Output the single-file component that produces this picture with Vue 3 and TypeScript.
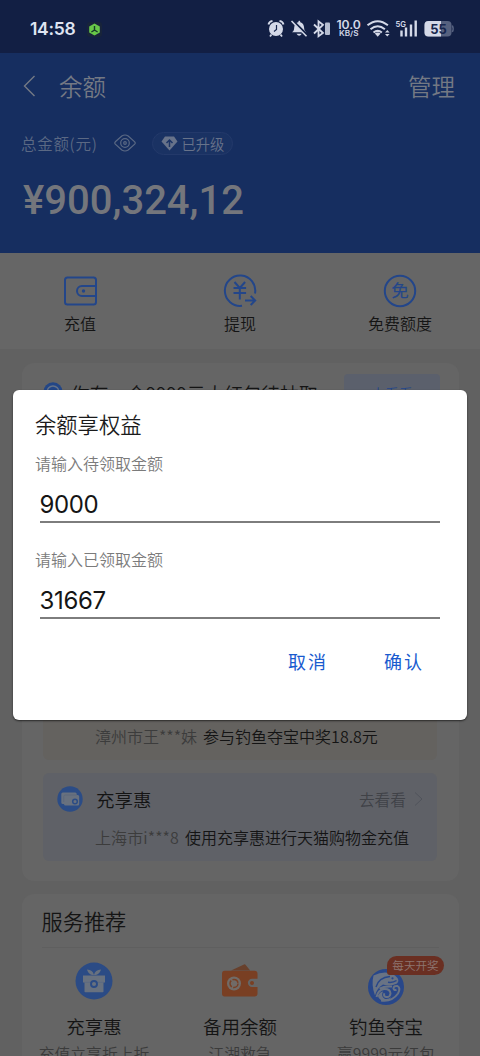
<script setup lang="ts">
import { ref } from 'vue'

interface Field {
  id: string
  label: string
  value: string
}

const fields = ref<Field[]>([
  { id: 'pending', label: '请输入待领取金额', value: '9000' },
  { id: 'claimed', label: '请输入已领取金额', value: '31667' },
])
</script>

<template>
  <div class="screen">
    <header class="status">
      <span class="clock">14:58</span>
      <svg class="cube" width="15" height="15" viewBox="0 0 15 15">
        <rect width="15" height="15" rx="3" fill="#18243a" />
        <path d="M7.5 1.5 12.8 4.5V10.5L7.5 13.5 2.2 10.5V4.5Z" fill="#68c849" />
        <path d="M7.5 4V8L4.4 10M7.5 8l3.1 2" stroke="#173c28" stroke-width="1.4" fill="none" />
      </svg>
      <svg class="status-icons" width="188" height="24" viewBox="267 17 188 24" fill="none" stroke="#d4d9e8">
        <circle cx="276" cy="29" r="7" fill="#d4d9e8" stroke="none" />
        <path d="M268.5 24.5Q269 21.5 272.5 20.8M279.5 20.8Q283 21.5 283.5 24.5M271.5 34.5l-1.5 2M280.5 34.5l1.5 2" stroke-width="1.8" />
        <path d="M276.5 25v4.5l-2.5 2" stroke="#17264e" stroke-width="1.2" />
        <path d="M292 32.300c2.200-1.200 2-3 2.200-4.700.2-3 1.700-5 4.100-5.400.2-1.800 1.800-1.800 2 0 2.600.6 3.700 3 3.800 5.500.1 2.400.6 3.400 2.400 4.600zM296.500 33.800h5.300q-2.600 4-5.300 0z" fill="#d4d9e8" stroke="none" />
        <path d="M291.800 19.800 307 35" stroke="#122044" stroke-width="2.500" />
        <path d="M291.500 21 306.500 36.200" stroke-width="1.6" />
        <path d="M314 24.5 323 33 318.5 36.3V21.3L323 24.8 314 33.5" stroke-width="1.8" />
        <rect x="325" y="22.5" width="5" height="12.5" rx="1" fill="#b5bdd0" stroke="none" />
        <g fill="#d4d9e8" stroke="none" font-family="Inter, sans-serif" font-weight="600">
          <text x="336.4" y="29" font-size="11.2" textLength="24.5" lengthAdjust="spacingAndGlyphs">10.0</text>
          <text x="339" y="36.300" font-size="7.3" textLength="19.5" lengthAdjust="spacingAndGlyphs">KB/S</text>
          <text x="395.5" y="26.7" font-size="8" textLength="10.5" lengthAdjust="spacingAndGlyphs">5G</text>
        </g>
        <path d="M367.5 25.3q10.200-8.200 20.400 0M370.500 29.200q7.200-5.800 14.400 0M373.500 32.500q4.200-3.200 8.400 0" stroke-width="2" />
        <path d="M374.800 33.500q2.900-2 5.800 0l-2.900 3.200zM385 32.600l2.300-2.600 2.300 2.600zM385 34l2.300 2.600 2.300-2.600z" fill="#d4d9e8" stroke="none" />
        <path d="M401.500 36.500v-6M406 36.500v-9M411 36.500v-12M415.700 36.500v-16" stroke-width="2.400" />
        <rect x="424.500" y="21" width="27" height="15.500" rx="4" fill="#56617f" stroke="none" />
        <path d="M428.500 21h12.500v15.500h-12.500q-4 0-4-4v-7.500q0-4 4-4z" fill="#d4d9e8" stroke="none" />
        <path d="M452.300 25.500q1.700 3.200 0 6.500" stroke="#56617f" stroke-width="1.500" />
        <text x="430.300" y="33.500" font-family="Inter, sans-serif" font-size="13" font-weight="700" fill="#17264e" stroke="none" textLength="16.500" lengthAdjust="spacingAndGlyphs">55</text>
      </svg>
    </header>

    <section class="balance">
      <nav class="nav">
        <svg width="14" height="22" viewBox="0 0 14 22" fill="none" stroke="#747984" stroke-width="1.400"><path d="M11.500 1 1.500 11 11.500 21" /></svg>
        <span class="nav-title">余额</span>
        <span class="manage">管理</span>
      </nav>
      <div class="summary">
        <span class="total">总金额(元)</span>
        <svg class="eye" width="22" height="18" viewBox="0 0 22 18" fill="none" stroke="#5b6984" stroke-width="1.200">
          <path d="M1.300 7.800 7.800 2q3.200-2 6.400 0l6.500 5.800q1 1.200 0 2.400L14.200 16q-3.200 2-6.400 0L1.300 10.200q-1-1.200 0-2.400z" />
          <circle cx="11" cy="9" r="4.300" /><circle cx="11" cy="9" r="1.300" />
        </svg>
        <span class="badge">
          <svg width="17" height="15" viewBox="0 0 17 15"><path d="M4 0.500h9l3.500 5L8.500 14.500 0.500 5.500z" fill="#68738a" /><path d="M8.500 11V4.500M5.500 7l3-3 3 3" stroke="#1d3566" stroke-width="1.500" fill="none" /></svg>
          已升级
        </span>
      </div>
      <div class="amount">¥900,324,12</div>
    </section>

    <section class="actions">
      <div class="action">
        <svg width="34" height="34" viewBox="0 0 34 34" fill="none" stroke="#23468a" stroke-width="2">
          <rect x="2" y="3.500" width="31" height="27" rx="2.500" />
          <path d="M32.500 12H19a5 5 0 0 0 0 10H32.500" /><circle cx="20.500" cy="17" r="1.700" fill="#23468a" stroke="none" />
        </svg>
        <span>充值</span>
      </div>
      <div class="action">
        <svg width="34" height="34" viewBox="0 0 34 34" fill="none" stroke="#23468a" stroke-width="2">
          <path d="M19 31.800A15.200 15.200 0 1 1 32 19.500" />
          <path d="M11.500 8l5.300 6 5.300-6M10.500 14h12.600M10.500 19h12.600M16.800 13.500v12M22 26.500h10M27.700 22l4.500 4.500-4.500 4.500" />
        </svg>
        <span>提现</span>
      </div>
      <div class="action">
        <svg width="34" height="34" viewBox="0 0 34 34" fill="none">
          <circle cx="17" cy="17" r="15.200" stroke="#23468a" stroke-width="2" />
          <text x="17" y="23.200" text-anchor="middle" font-size="17.500" fill="#23468a" stroke="#23468a" stroke-width=".250">免</text>
        </svg>
        <span>免费额度</span>
      </div>
    </section>

    <main class="content">
      <section class="card offers">
        <div class="promo">
          <svg width="20" height="20" viewBox="0 0 20 20"><circle cx="10" cy="10" r="9.700" fill="#234686" /><path d="M4 10a6 6 0 0 1 12 0" fill="none" stroke="#657287" stroke-width="1.500" /></svg>
          <span class="promo-text">你有一个9999元大红包待抽取</span>
          <span class="promo-button">去看看</span>
        </div>
        <article class="offer warm">
          <div class="offer-head"><span class="offer-icon"></span><h3>钓鱼夺宝</h3></div>
          <p><span class="user">漳州市王***妹</span><span>参与钓鱼夺宝中奖18.8元</span></p>
        </article>
        <article class="offer cool">
          <div class="offer-head">
            <svg class="offer-icon" width="26" height="26" viewBox="0 0 26 26">
              <circle cx="13" cy="13" r="12.700" fill="#2b4c86" />
              <path d="M4.300 8q0-1.500 1.500-1.500h12.400q1.500 0 1.500 1.500v1h1q1.500 0 1.500 1.500v7.500q0 1.500-1.500 1.500H8.500q-1.500 0-1.500-1.500H5.800q-1.500 0-1.500-1.500z" fill="#68717f" />
              <path d="M6.700 16V10.500Q6.700 9 8.200 9H19.700" fill="none" stroke="#59657c" stroke-width=".700" />
              <circle cx="18" cy="15.500" r="2.300" fill="#68717f" stroke="#2b4c86" stroke-width="1.500" />
            </svg>
            <h3>充享惠</h3>
            <span class="visit">去看看</span>
            <svg width="9" height="16" viewBox="0 0 9 16" fill="none" stroke="#50535b"><path d="M1 1.500 8 8 1 14.500" /></svg>
          </div>
          <p><span class="user">上海市i***8</span><span>使用充享惠进行天猫购物金充值</span></p>
        </article>
      </section>

      <section class="card services">
        <h2>服务推荐</h2>
        <div class="service-grid">
          <div class="service">
            <svg width="38" height="38" viewBox="0 0 38 38">
              <circle cx="19" cy="19" r="18.500" fill="#2b4b85" />
              <path d="M8 13.500h22v7h-1.500v9q0 .800-.800.800H10.300q-.800 0-.800-.800v-9H8zM19 13c-1-4-3-5-7-5.500 1 3.500 3 5.500 7 5.500 4 0 6-2 7-5.500-4 .500-6 1.500-7 5.500z" fill="#68717f" />
              <path d="M9.500 20.300h19" stroke="#566584" stroke-width=".600" /><circle cx="19" cy="22" r="3" fill="#68717f" stroke="#2b4b85" stroke-width="1.900" />
            </svg>
            <h3>充享惠</h3><p>充值立享折上折</p>
          </div>
          <div class="service">
            <svg width="38" height="38" viewBox="0 0 38 38">
              <path d="M10 8.500 23 2.500q1-.500 1.700.500l4.500 5.500z" fill="#68402c" />
              <path d="M3.500 8.700h30q3 0 3 3v5H31a4 4 0 0 0 0 8.300h5.500v6.500q0 3-3 3h-30q-2.500 0-2.500-3V11.700q0-3 2.500-3z" fill="#793f23" />
              <circle cx="13" cy="21.500" r="7" fill="#716b67" /><circle cx="13" cy="21.500" r="4" fill="none" stroke="#793f23" stroke-width="1.500" stroke-dasharray="7 1.400" /><circle cx="31" cy="21" r="2" fill="#793f23" />
            </svg>
            <h3>备用余额</h3><p>江湖救急</p>
          </div>
          <div class="service fish">
            <svg width="38" height="38" viewBox="0 0 38 38">
              <circle cx="19" cy="19" r="18" fill="#28478a" />
              <path d="M6.500 7.500Q19 1.500 28 7.500 33.500 12 30 15.500 23 19 16 16.500 10 20 8 27.500 4 17 6.500 7.500z" fill="#697384" />
              <path d="M9 19Q11.500 9.500 23 8.500M21 14.300q5 .700 8.500-1.800" fill="none" stroke="#28478a" stroke-width="1.400" />
              <circle cx="25.500" cy="10.300" r="1.100" fill="#28478a" />
              <path d="M9.500 29Q11 22 17 21q6-.500 6.500 4.500-.500 4-4.500 3.500-3-1-1.500-3.800M14 32.500Q25 34 31 25.500q3-5.500-.500-7.500-4-.500-4 2.500.500 2.300 3 1.300M12.500 20.500Q17 18 25 18.500" fill="none" stroke="#697384" stroke-width="2" />
              <path d="M11 27.500q2.500-4 5-4-2.500 5 2 7.500 4 .500 6-2-2 4.500-9 3.500-4-2-4-5z" fill="#697384" />
            </svg>
            <span class="ribbon">每天开奖</span>
            <h3>钓鱼夺宝</h3><p>赢9999元红包</p>
          </div>
        </div>
      </section>
    </main>

    <div class="dialog" role="dialog">
      <h1>余额享权益</h1>
      <label v-for="field in fields" :key="field.id" class="field">
        <span>{{ field.label }}</span>
        <input v-model="field.value" type="text" />
      </label>
      <div class="buttons"><button type="button">取消</button><button type="button">确认</button></div>
    </div>
  </div>
</template>

<style>
body { margin: 0; }
</style>

<style scoped>
* { box-sizing: border-box; }
h1, h2, h3, p { margin: 0; font-weight: inherit; }
svg { display: block; flex: none; }
.screen { position: relative; width: 480px; height: 1056px; overflow: hidden; background: #616161; color: #141414; font-family: "Noto Sans CJK SC", "Noto Sans", sans-serif; font-weight: 350; white-space: nowrap; }
.status { display: flex; align-items: center; height: 53px; padding: 5px 25px 0 30px; background: #121f44; }
.clock { width: 46px; color: #dfe4f2; font: 600 17.500px/24px Inter, sans-serif; letter-spacing: -.3px; }
.cube { margin-left: 11px; }
.status-icons { margin-left: auto; }
.balance { height: 200px; padding: 12px 25px 0 23px; background: #162e60; color: #747984; }
.nav { display: flex; align-items: center; height: 42px; font-size: 23.500px; line-height: 42px; }
.nav-title { margin-left: 22px; }
.manage { margin-left: auto; }
.summary { display: flex; align-items: center; height: 24px; margin-top: 24px; color: #5b6984; font-size: 15.500px; line-height: 24px; }
.total { width: 91px; margin-left: -2px; letter-spacing: .7px; }
.eye { margin-left: 1.500px; }
.badge { display: flex; align-items: center; gap: 4px; width: 81px; height: 23px; margin-left: 16px; padding-left: 8px; border: 1px solid #23396a; border-radius: 12px; background: #1a3263; color: #68738a; font-size: 14.300px; line-height: 21px; }
.amount { margin-top: 22px; color: #74767c; font: 500 40px/48px Roboto, sans-serif; }
.actions { display: grid; grid-template-columns: repeat(3, 1fr); height: 96px; padding-top: 21px; background: #666; }
.action { display: flex; flex-direction: column; align-items: center; gap: 4px; font-size: 16px; line-height: 23px; }
.content { padding: 14px 21.500px 0; }
.card { border-radius: 12px; background: #656565; }
.offers { height: 518px; padding: 11px 21.500px 0; }
.promo { display: flex; align-items: flex-start; height: 38px; }
.promo > svg { margin-top: 8px; }
.promo-text { width: 250px; margin: 5px 0 0 8px; font-size: 18.700px; line-height: 28px; }
.promo-button { width: 96px; height: 34px; margin-left: auto; margin-right: -3px; border-radius: 4px; background: #5b606c; color: #23468a; font-size: 14px; line-height: 38px; text-align: center; }
.offer { height: 88px; padding: 12px 14px 0; border-radius: 6px; }
.offer.warm { margin-top: 260px; background: #64625f; }
.offer.cool { margin-top: 13px; background: #5f6167; }
.offer-head { display: flex; align-items: center; height: 28px; }
.offer-icon { width: 26px; }
.offer h3 { margin-left: 13px; font-size: 18.500px; line-height: 28px; }
.visit { margin-left: auto; margin-right: 8px; color: #404247; font-size: 15.700px; }
.offer p { display: flex; gap: 6px; margin: 12px 0 0 38px; font-size: 16px; line-height: 24px; }
.user { color: #3c3c3c; }
.cool .user { letter-spacing: .1px; }
.services { height: 200px; margin-top: 13px; padding: 11px 0 0; }
.services h2 { height: 43px; margin: 0 20px; border-bottom: 1px solid #5f5f5f; font-size: 21.200px; line-height: 32px; }
.service-grid { display: grid; grid-template-columns: repeat(3, 146px); justify-content: center; padding-top: 14px; }
.service { position: relative; display: flex; flex-direction: column; align-items: center; }
.service h3 { margin-top: 12px; font-size: 18.500px; line-height: 28px; }
.service p { margin-top: 2px; color: #3b3b3b; font-size: 15.800px; line-height: 24px; }
.fish > svg { margin-top: 6px; }
.fish h3 { margin-top: 6px; }
.ribbon { position: absolute; left: 74px; top: -6px; width: 57px; height: 19px; border-radius: 9.500px 9.500px 9.500px 3px; background: #6a2f22; color: #8d7570; font-size: 11.600px; line-height: 18px; text-align: center; }
.dialog { position: absolute; left: 13px; top: 390px; width: 454px; height: 330px; padding: 19px 27px 0 22px; border-radius: 6px; background: #fff; box-shadow: 0 1px 2px rgba(0, 0, 0, .6); }
.dialog h1 { height: 30px; color: #1b1b1b; font-size: 21.300px; line-height: 30px; }
.field { display: block; height: 96px; padding-top: 12px; color: #7b7b7b; font-size: 16px; line-height: 24px; }
.field span { display: block; }
.field input { display: block; width: 400px; height: 48px; margin-left: 5px; padding: 12px 0 0; border: 0; border-bottom: 2px solid #7d7d7d; border-radius: 0; outline: 0; background: transparent; color: #151515; font: 400 24px/30px Inter, sans-serif; letter-spacing: -.35px; text-indent: -.5px; }
.buttons { display: flex; justify-content: flex-end; gap: 56px; margin: 13px 16px 0 0; }
.buttons button { padding: 0; border: 0; background: none; color: #195bcf; font: 400 18px/34px "Noto Sans CJK SC", sans-serif; letter-spacing: 2px; }
</style>
